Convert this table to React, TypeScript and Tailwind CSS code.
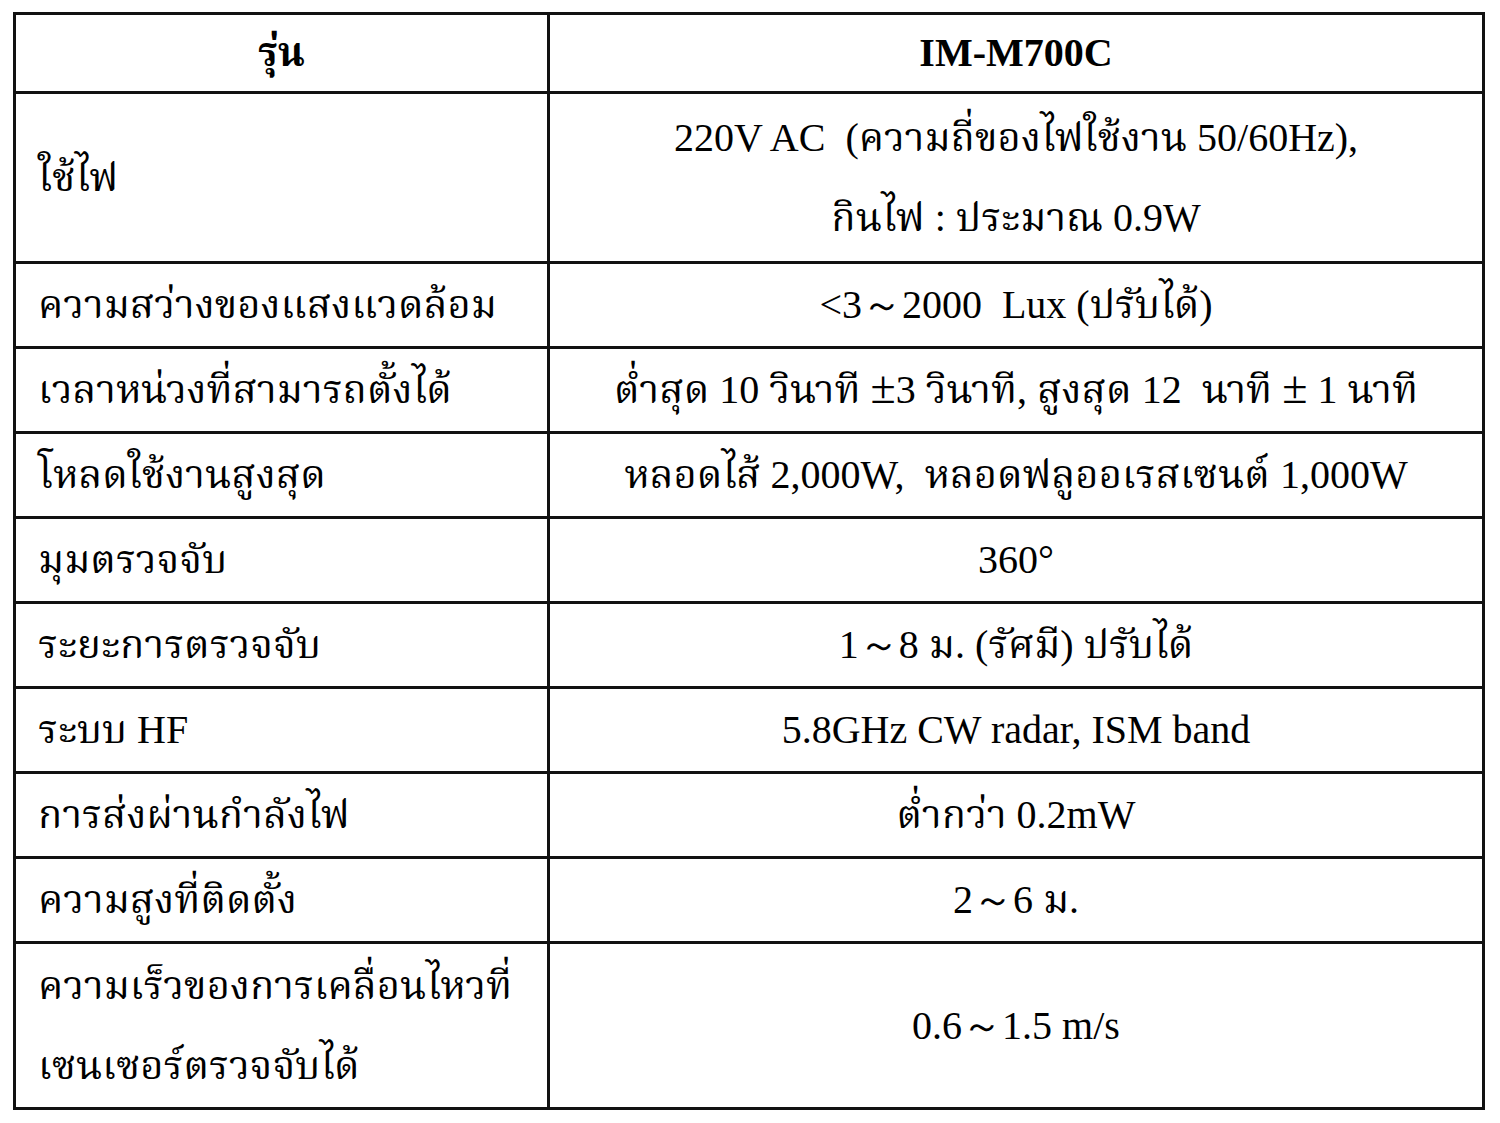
import React from "react";

const W = "～";

const Pm = () => <span className="text-[46px] leading-none">±</span>;

const rows: { label: React.ReactNode[]; value: React.ReactNode[]; h: string }[] = [
  { label: ["ใช้ไฟ"], value: ["220V AC  (ความถี่ของไฟใช้งาน 50/60Hz),", "กินไฟ : ประมาณ 0.9W"], h: "h-[170px]" },
  { label: ["ความสว่างของแสงแวดล้อม"], value: [`<3${W}2000  Lux (ปรับได้)`], h: "h-[85px]" },
  {
    label: ["เวลาหน่วงที่สามารถตั้งได้"],
    value: [
      <>
        ต่ำสุด 10 วินาที <Pm />3 วินาที, สูงสุด 12  นาที <Pm /> 1 นาที
      </>,
    ],
    h: "h-[85px]",
  },
  { label: ["โหลดใช้งานสูงสุด"], value: ["หลอดไส้ 2,000W,  หลอดฟลูออเรสเซนต์ 1,000W"], h: "h-[85px]" },
  { label: ["มุมตรวจจับ"], value: ["360°"], h: "h-[85px]" },
  { label: ["ระยะการตรวจจับ"], value: [`1${W}8 ม. (รัศมี) ปรับได้`], h: "h-[85px]" },
  { label: ["ระบบ HF"], value: ["5.8GHz CW radar, ISM band"], h: "h-[85px]" },
  { label: ["การส่งผ่านกำลังไฟ"], value: ["ต่ำกว่า 0.2mW"], h: "h-[85px]" },
  { label: ["ความสูงที่ติดตั้ง"], value: [`2${W}6 ม.`], h: "h-[85px]" },
  { label: ["ความเร็วของการเคลื่อนไหวที่", "เซนเซอร์ตรวจจับได้"], value: [`0.6${W}1.5 m/s`], h: "h-[166px]" },
];

export default function App() {
  return (
    <div
      className="w-[1500px] h-[1123px] bg-white pt-[12px] pl-[13px]"
      style={{ fontFamily: '"Liberation Serif", "Kinnari", "Norasi", "Noto Serif Thai", "Noto Sans Thai", serif' }}
    >
      <table className="border-collapse w-[1472px] text-black text-[40px] leading-[80px] table-fixed">
        <colgroup>
          <col className="w-[534px]" />
          <col />
        </colgroup>
        <thead>
          <tr className="h-[79px]">
            <th className="border-[3px] border-[#111] text-center font-bold leading-[60px] py-0">รุ่น</th>
            <th className="border-[3px] border-[#111] text-center font-bold leading-[60px] py-0">IM-M700C</th>
          </tr>
        </thead>
        <tbody>
          {rows.map((r, i) => (
            <tr key={i} className={r.h}>
              <td className="border-[3px] border-[#111] pl-[22px] align-middle">
                {r.label.map((l, j) => (
                  <div key={j} className="whitespace-pre">{l}</div>
                ))}
              </td>
              <td className="border-[3px] border-[#111] text-center align-middle">
                {r.value.map((v, j) => (
                  <div key={j} className="whitespace-pre">{v}</div>
                ))}
              </td>
            </tr>
          ))}
        </tbody>
      </table>
    </div>
  );
}
